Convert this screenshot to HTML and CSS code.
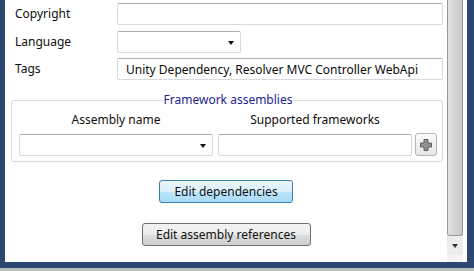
FILE: index.html
```html
<!DOCTYPE html>
<html>
<head>
<meta charset="utf-8">
<link rel="stylesheet" href="styles.css">
</head>
<body>
<div class="window">
  <div class="frame">
    <div class="content">
      <div class="form">
        <label class="lbl">Copyright</label>
        <div class="textbox wide"></div>
        <label class="lbl">Language</label>
        <div class="combo short"><span class="arrow"></span></div>
        <label class="lbl">Tags</label>
        <div class="textbox wide"><span class="val">Unity Dependency, Resolver MVC Controller WebApi</span></div>
      </div>
      <fieldset class="group">
        <legend class="legend">Framework assemblies</legend>
        <div class="ggrid">
          <div class="hdr">Assembly name</div>
          <div class="hdr">Supported frameworks</div>
          <div></div>
          <div class="combo"><span class="arrow"></span></div>
          <div class="textbox"></div>
          <button class="plus" type="button">
            <svg width="14" height="14" viewBox="0 0 14 14"><path d="M5 1.5h4v3.5h3.5v4H9v3.5H5V9H1.5V5H5z" fill="#8f9194" stroke="#5d5f62" stroke-width="1"/></svg>
          </button>
        </div>
      </fieldset>
      <div class="buttons">
        <button class="btn default" type="button">Edit dependencies</button>
        <button class="btn ref" type="button">Edit assembly references</button>
      </div>
    </div>
    <div class="scroll">
      <div class="thumb"></div>
      <div class="down"><span class="darr"></span></div>
      <div class="track"></div>
    </div>
  </div>
  <div class="bottom"></div>
</div>
</body>
</html>
```
FILE: styles.css
```css
html, body {
  margin: 0;
  padding: 0;
  background: #ffffff;
}
body {
  font-family: "Noto Sans", "Open Sans", "DejaVu Sans", sans-serif;
  font-size: 12px;
  color: #0e0e0e;
}
.window {
  width: 474px;
  height: 271px;
  display: flex;
  flex-direction: column;
  overflow: hidden;
}
.frame {
  flex: 1;
  display: flex;
  border-left: 5px solid #2c4870;
  border-right: 7px solid #2c4870;
  min-height: 0;
}
.bottom {
  height: 6px;
  background: #2c4870;
  border-bottom: 3px solid #b9bcc0;
}
.content {
  width: 442px;
  display: flex;
  flex-direction: column;
}
.form {
  display: grid;
  grid-template-columns: 102px 326px;
  row-gap: 5.5px;
  align-items: center;
  padding: 3px 4px 0 10px;
}
.lbl {
  line-height: 16px;
}
.textbox, .combo {
  height: 20px;
  border: 1px solid #d6d9dd;
  border-top-color: #abadb3;
  border-radius: 2px;
  background: #fff;
  box-sizing: content-box;
  position: relative;
  display: flex;
  align-items: center;
}
.wide { width: 324px; }
.short { width: 122px; }
.val {
  padding-left: 8px;
  white-space: nowrap;
  color: #0a0a0a;
}
.arrow {
  position: absolute;
  right: 6px;
  top: 9px;
  width: 0;
  height: 0;
  border-left: 3.5px solid transparent;
  border-right: 3.5px solid transparent;
  border-top: 4px solid #111;
}
.group {
  margin: 13px 4px 0 6px;
  padding: 3px 5px 5px 7px;
  border: 1px solid #d5dbe0;
  border-radius: 3px;
  min-width: 0;
}
.legend {
  margin: 0 auto;
  padding: 0 1px;
  color: #23238e;
  line-height: 14px;
}
.ggrid {
  display: grid;
  grid-template-columns: 194px 194px 22px;
  column-gap: 5px;
  row-gap: 4px;
  align-items: center;
}
.ggrid .plus { margin-left: -2px; }
.ggrid .combo, .ggrid .textbox {
  width: 194px;
  box-sizing: border-box;
  height: 22px;
}
.hdr {
  text-align: center;
  line-height: 19px;
}
.plus {
  width: 22px;
  height: 23px;
  padding: 0;
  border: 1px solid #b2b5b9;
  border-radius: 3px;
  background: linear-gradient(#fbfbfb, #e6e6e6);
  display: flex;
  align-items: center;
  justify-content: center;
}
.buttons {
  display: flex;
  flex-direction: column;
  align-items: center;
  gap: 20px;
  margin-top: 18px;
}
.btn {
  font-family: inherit;
  font-size: 12px;
  color: #111;
  height: 23px;
  padding: 0;
  border: 1px solid #707070;
  border-radius: 3px;
  background: linear-gradient(#f3f3f3 0%, #ebebeb 50%, #dddddd 50%, #cfcfcf 100%);
}
.btn.default {
  width: 134px;
  border-color: #3c7fb1;
  background: linear-gradient(#eaf6fd 0%, #d9f0fc 50%, #bee6fd 50%, #a7d9f5 100%);
}
.btn.ref {
  width: 169px;
}
.scroll {
  width: 16px;
  margin-right: 4px;
  display: flex;
  flex-direction: column;
  background: #f0f0f0;
}
.thumb {
  height: 236px;
  box-sizing: border-box;
  border: 1px solid #979797;
  border-top: none;
  border-radius: 0 0 3px 3px;
  background: linear-gradient(90deg, #e2e2e2, #d3d3d3 50%, #c8c8c8);
}
.down {
  height: 19px;
  display: flex;
  align-items: center;
  justify-content: center;
  background: #ececec;
}
.darr {
  width: 0;
  height: 0;
  border-left: 3.5px solid transparent;
  border-right: 3.5px solid transparent;
  border-top: 4px solid #333;
}
.track {
  flex: 1;
  background: #f4f4f4;
}
```
